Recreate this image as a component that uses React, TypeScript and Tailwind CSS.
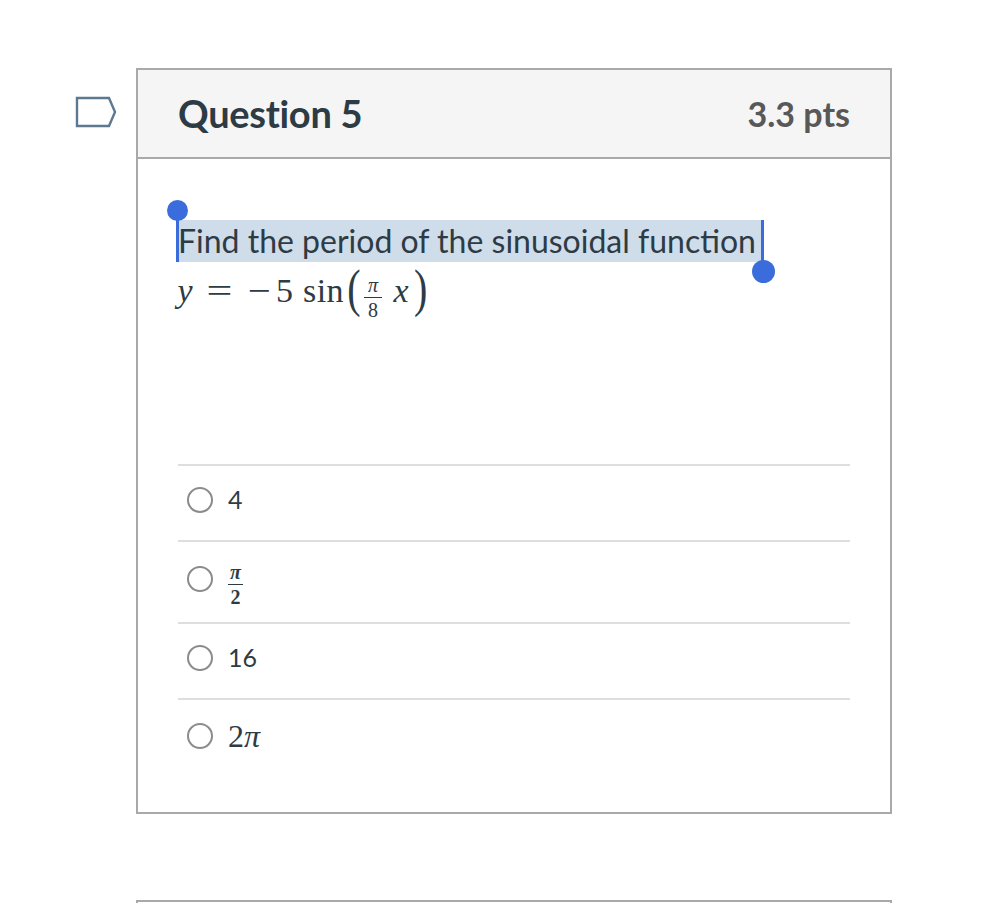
import React from "react";

const MATH = { fontFamily: '"Liberation Serif", "DejaVu Serif", serif' };

// Small stacked fraction used by the KaTeX-looking bits.
function Frac({ top, bottom, size, w }: { top: string; bottom: string; size: string; w: string }) {
    return (
        <span className={`inline-flex flex-col items-center leading-none ${size} ${w}`} style={MATH}>
            <span className="italic">{top}</span>
            <span className="block w-full h-[1.5px] bg-[#2d3b45] my-[2px]" />
            <span>{bottom}</span>
        </span>
    );
}

function Radio() {
    return <span className="w-[26px] h-[26px] rounded-full border-[2.5px] border-[#8b8b8b] shrink-0" />;
}

function Answer({ children, h = "h-[76px]" }: { children: React.ReactNode; h?: string }) {
    return (
        <div className={`flex items-center border-t-2 border-[#dedede] ${h} pl-[9px] pb-[6px]`}>
            <Radio />
            <div className="ml-[15px] text-[25px] text-[#2d3b45]">{children}</div>
        </div>
    );
}

function Bookmark() {
    return (
        <svg width="44" height="34" viewBox="0 0 44 34" fill="none">
            <path d="M3 3 H35 L41 17 L35 31 H3 Z" stroke="#5d7891" strokeWidth="2.4" strokeLinejoin="miter" />
        </svg>
    );
}

export default function App() {
    return (
        <div className="w-full h-[903px] overflow-hidden bg-white" style={{ fontFamily: 'Lato, "Liberation Sans", sans-serif' }}>
            <div className="flex items-start pl-[74px] pt-[68px]">
                <div className="w-[62px] pt-[27px]">
                    <Bookmark />
                </div>
                <div className="w-[756px]">
                    <div className="border-2 border-[#a9a9a9]">
                        <div className="flex items-center justify-between h-[89px] bg-[#f5f5f5] border-b-2 border-[#a9a9a9] px-[40px]">
                            <span className="text-[38px] font-bold text-[#2d3b45] tracking-[-0.3px]">Question 5</span>
                            <span className="text-[34px] font-bold text-[#585858]">3.3 pts</span>
                        </div>
                        <div className="px-[40px] pt-[61px] pb-[40px] relative">
                            <div className="text-[32px] leading-[42px] h-[42px] text-[#2d3b45]">
                                <span className="inline-block align-top leading-[42px] bg-[#cfdcea] -ml-[2px] pl-[2px] pr-[8px]">
                                    Find the period of the sinusoidal function
                                </span>
                            </div>
                            <div className="flex items-center h-[58px] text-[34px] text-[#2d3b45] leading-none" style={MATH}>
                                <span className="inline-block w-[16px] -ml-[1px] text-center italic">y</span>
                                <span className="inline-block w-[25px] ml-[14px] text-center scale-x-[1.35]">=</span>
                                <span className="inline-block w-[22px] ml-[16px] text-center scale-x-[1.2]">−</span>
                                <span className="inline-block w-[16px] ml-[6px] text-center">5</span>
                                <span className="inline-block w-[47px] ml-[8px] text-center tracking-[0.5px]">sin</span>
                                <span className="inline-block w-[14px] text-center text-[40px] scale-y-[1.3] -mt-[4px]">(</span>
                                <span className="inline-block ml-[3px] mt-[2px]">
                                    <Frac top="π" bottom="8" size="text-[20px]" w="w-[18px]" />
                                </span>
                                <span className="inline-block w-[20px] ml-[9px] text-center italic">x</span>
                                <span className="inline-block w-[12px] ml-[3px] text-center text-[40px] scale-y-[1.3] -mt-[4px]">)</span>
                            </div>
                            {/* selection handles */}
                            <span className="absolute left-[38px] top-[51px] w-[3px] h-[52px] bg-[#3a6ddb]" />
                            <span className="absolute left-[29px] top-[41px] w-[21px] h-[21px] rounded-full bg-[#3a6ddb]" />
                            <span className="absolute left-[623px] top-[61px] w-[3px] h-[48px] bg-[#3a6ddb]" />
                            <span className="absolute left-[614px] top-[101px] w-[23px] h-[23px] rounded-full bg-[#3a6ddb]" />

                            <div className="mt-[144px]">
                                <Answer>4</Answer>
                                <Answer h="h-[82px]">
                                    <Frac top="π" bottom="2" size="text-[20px] font-bold" w="w-[15px]" />
                                </Answer>
                                <Answer>16</Answer>
                                <div className="flex items-center border-t-2 border-[#dedede] h-[74px] pl-[9px]">
                                    <Radio />
                                    <div className="ml-[15px] text-[32px] leading-none text-[#2d3b45]" style={MATH}>
                                        2<span className="italic">π</span>
                                    </div>
                                </div>
                            </div>
                        </div>
                    </div>
                    <div className="mt-[86px] h-[20px] border-t-2 border-x-2 border-[#a9a9a9]" />
                </div>
            </div>
        </div>
    );
}
